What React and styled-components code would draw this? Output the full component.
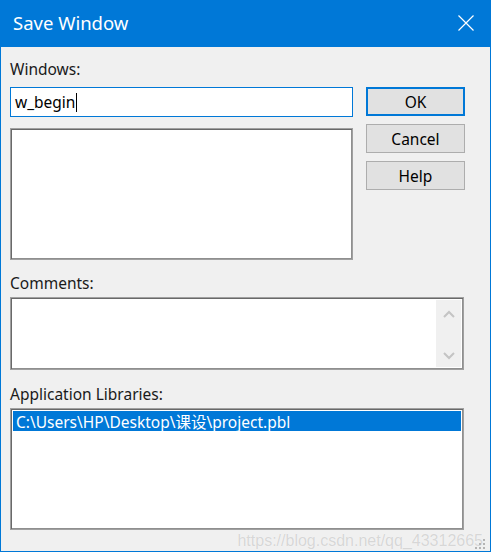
import React from "react";
import styled, { createGlobalStyle } from "styled-components";

const GlobalStyle = createGlobalStyle`
  html, body {
    margin: 0;
    padding: 0;
    background: #f0f0f0;
  }
  body {
    font-family: "Noto Sans", "Noto Sans CJK SC", sans-serif;
  }
`;

const Window = styled.div`
  position: relative;
  box-sizing: border-box;
  width: 491px;
  height: 552px;
  border: 1px solid #0078d7;
  border-top: none;
  background: #f0f0f0;
  overflow: hidden;
`;

const TitleBar = styled.div`
  display: flex;
  align-items: center;
  justify-content: space-between;
  height: 47px;
  margin: 0 -1px;
  padding: 0 17px 2px 13px;
  box-sizing: border-box;
  background: #0078d7;
  color: #ffffff;
`;

const Title = styled.span`
  font-size: 18.5px;
`;

const Client = styled.div`
  padding: 0 26px 0 9px;
`;

const TopSection = styled.div`
  display: grid;
  grid-template-columns: 343px 99px;
  column-gap: 13px;
`;

const Column = styled.div`
  display: flex;
  flex-direction: column;
  gap: ${(p) => p.$gap || 0}px;
  padding-top: ${(p) => p.$top || 0}px;
`;

const Label = styled.div`
  font-size: 15.5px;
  line-height: 20px;
  color: #1a1a1a;
  margin: ${(p) => p.$top}px 0 ${(p) => p.$bottom}px;
`;

const TextInput = styled.div`
  display: flex;
  align-items: center;
  box-sizing: border-box;
  height: 30px;
  padding-left: 4px;
  border: 1px solid #0078d7;
  background: #fff;
  font-size: 15.5px;
  color: #000;
`;

const Caret = styled.span`
  display: inline-block;
  width: 1px;
  height: 19px;
  margin-left: 1px;
  background: #000;
`;

const Box = styled.div`
  position: relative;
  box-sizing: border-box;
  height: ${(p) => p.$height}px;
  margin-top: ${(p) => p.$top || 0}px;
  border: 1px solid #a0a0a0;
  box-shadow: inset 1px 1px 0 #696969, inset -1px -1px 0 #8f8f8f;
  background: #fff;
  padding: 2px;
`;

const Button = styled.div`
  display: flex;
  align-items: center;
  justify-content: center;
  box-sizing: border-box;
  height: 29px;
  background: #e1e1e1;
  border: ${(p) => (p.$primary ? "2px solid #0078d7" : "1px solid #adadad")};
  font-size: 15.5px;
  color: #000;
`;

const ScrollBar = styled.div`
  position: absolute;
  top: 2px;
  right: 2px;
  bottom: 2px;
  width: 25px;
  display: flex;
  flex-direction: column;
  justify-content: space-between;
  align-items: center;
  padding: 10px 0 7px;
  box-sizing: border-box;
  background: #f0f0f0;
`;

const ListRow = styled.div`
  height: 20px;
  padding-left: 3px;
  display: flex;
  align-items: center;
  font-size: 15.5px;
  background: ${(p) => (p.$selected ? "#0078d7" : "transparent")};
  color: ${(p) => (p.$selected ? "#fff" : "#000")};
  white-space: nowrap;
`;

const Watermark = styled.div`
  position: absolute;
  right: 7px;
  bottom: 1px;
  font-family: "Liberation Sans", Arial, sans-serif;
  font-size: 16px;
  color: rgba(190, 190, 190, 0.6);
  text-shadow: 0 0 1px rgba(255, 255, 255, 0.9);
`;

const Grip = styled.svg`
  position: absolute;
  right: 3px;
  bottom: 2px;
`;

function Chevron({ up }) {
  return (
    <svg width="12" height="8" viewBox="0 0 12 8">
      <path
        d={up ? "M1 7 L6 2 L11 7" : "M1 1 L6 6 L11 1"}
        fill="none"
        stroke="#c4c4c4"
        strokeWidth="2"
      />
    </svg>
  );
}

export default function App() {
  return (
    <>
      <GlobalStyle />
      <Window>
        <TitleBar>
          <Title>Save Window</Title>
          <svg width="16" height="16" viewBox="0 0 16 16">
            <path d="M0.5 0.5 L15.5 15.5 M15.5 0.5 L0.5 15.5" stroke="#fff" strokeWidth="1.2" />
          </svg>
        </TitleBar>
        <Client>
          <TopSection>
            <Column>
              <Label $top={12} $bottom={8}>Windows:</Label>
              <TextInput>
                w_begin
                <Caret />
              </TextInput>
              <Box $height={132} $top={11} />
            </Column>
            <Column $top={40} $gap={8}>
              <Button $primary>OK</Button>
              <Button>Cancel</Button>
              <Button>Help</Button>
            </Column>
          </TopSection>

          <Label $top={13} $bottom={4}>Comments:</Label>
          <Box $height={73}>
            <ScrollBar>
              <Chevron up />
              <Chevron />
            </ScrollBar>
          </Box>

          <Label $top={14} $bottom={4}>Application Libraries:</Label>
          <Box $height={122}>
            <ListRow $selected>C:\Users\HP\Desktop\课设\project.pbl</ListRow>
          </Box>
        </Client>
        <Watermark>https://blog.csdn.net/qq_43312665</Watermark>
        <Grip width="12" height="10" viewBox="0 0 12 10">
          <g fill="#b4b4b4">
            <rect x="8" y="0" width="2" height="2" />
            <rect x="4" y="4" width="2" height="2" />
            <rect x="8" y="4" width="2" height="2" />
            <rect x="0" y="8" width="2" height="2" />
            <rect x="4" y="8" width="2" height="2" />
            <rect x="8" y="8" width="2" height="2" />
          </g>
        </Grip>
      </Window>
    </>
  );
}
